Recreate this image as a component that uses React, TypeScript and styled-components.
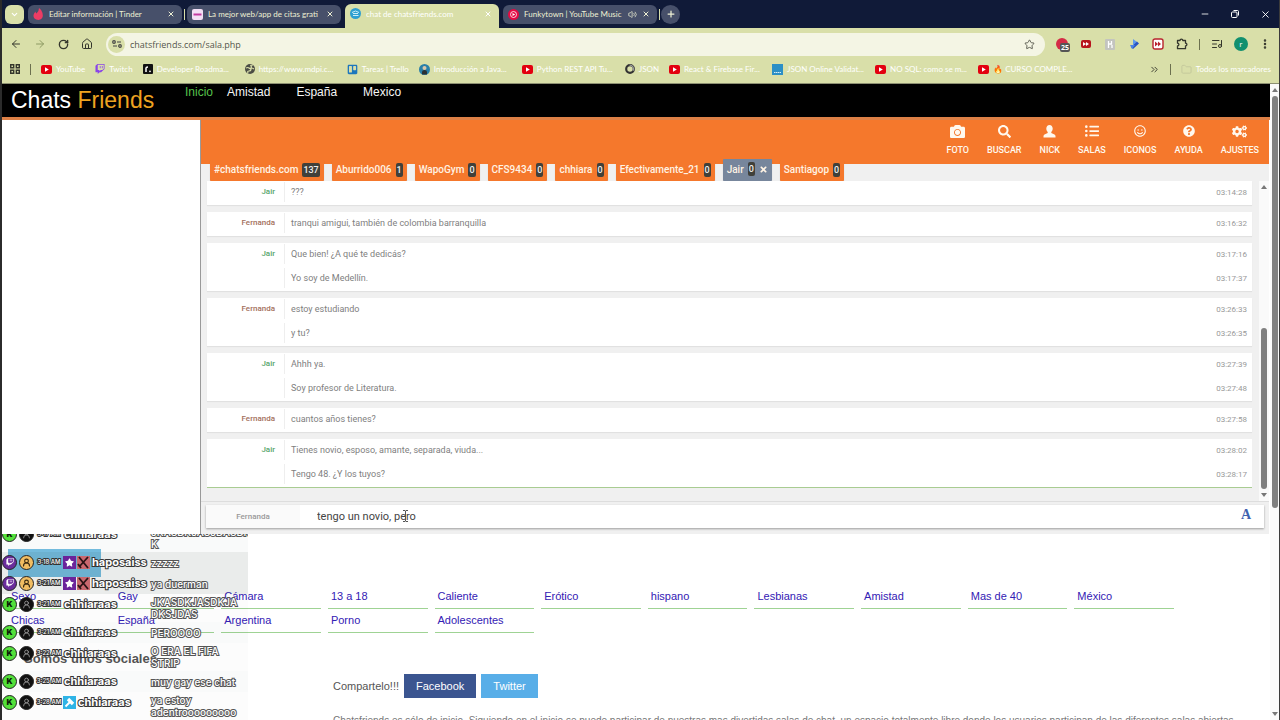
import React from "react";
import styled, { createGlobalStyle } from "styled-components";
import { FaCamera, FaSearch, FaListUl, FaRegSmile, FaQuestionCircle, FaCogs, FaTwitch, FaTimes, FaStar, FaTrello } from "react-icons/fa";
import { ArrowLeft, ArrowRight, RotateCw, House, Star, ListMusic, EllipsisVertical, X, Plus, Minus, ChevronDown, ChevronsRight, Folder, Volume2, UserRound } from "lucide-react";

const GlobalStyle = createGlobalStyle`
  * { box-sizing: border-box; }
  body { margin: 0; background: #fff; }
  button, input { font: inherit; color: inherit; border: 0; padding: 0; background: none; }
  a { color: inherit; text-decoration: none; }
  svg { flex: none; display: block; }
`;

const khaki = "#d9dfa9";
const orange = "#f5782c";
const chromeFont = 'Lato, "Open Sans", sans-serif';

const Window = styled.div`
  position: relative;
  display: flex;
  flex-direction: column;
  height: 100vh;
  overflow: hidden;
  border-left: 2px solid #2b2b2b;
  border-right: 1px solid #3b3b3b;
  font-family: "Liberation Sans", Arial, sans-serif;
`;

/* Browser chrome */
const TabStrip = styled.div`
  display: flex;
  align-items: center;
  flex: none;
  height: 28px;
  padding: 0 8px 0 3px;
  background: #101a38;
  font: 8px ${chromeFont};
`;
const TabSearch = styled.button`
  display: grid;
  place-items: center;
  width: 19px;
  height: 19px;
  margin-right: 2px;
  border-radius: 6px;
  background: ${khaki};
  color: #fff;
`;
const BrowserTab = styled.div<{ $active?: boolean }>`
  display: flex;
  align-items: center;
  gap: 5px;
  width: 154px;
  height: ${(p) => (p.$active ? "24px" : "19px")};
  align-self: ${(p) => (p.$active ? "flex-end" : "center")};
  margin: 0 2px;
  padding: ${(p) => (p.$active ? "0 7px 5px 5px" : "0 7px 0 5px")};
  border-radius: ${(p) => (p.$active ? "6px 6px 0 0" : "6px")};
  background: ${(p) => (p.$active ? khaki : "#47506a")};
  color: ${(p) => (p.$active ? "#fff" : "#eef0d4")};
`;
const TabTitle = styled.span`
  flex: 1;
  overflow: hidden;
  white-space: nowrap;
`;
const PlainButton = styled.button`
  display: grid;
  place-items: center;
`;
const TabDivider = styled.i`
  width: 1px;
  height: 11px;
  background: ${khaki};
`;
const NewTab = styled(PlainButton)`
  width: 19px;
  height: 19px;
  margin-left: 1px;
  border-radius: 50%;
  background: #47506a;
  color: #eef0d4;
`;
const WindowControls = styled.div`
  display: flex;
  gap: 20px;
  margin-left: auto;
  color: #fff;
`;
const Toolbar = styled.div`
  display: flex;
  align-items: center;
  flex: none;
  height: 32px;
  padding: 0 8px;
  background: ${khaki};
  color: #34362c;
`;
const IconGroup = styled.div`
  display: flex;
  align-items: center;
  gap: 12px;
`;
const MenuGroup = styled(IconGroup)`
  gap: 11px;
  margin-left: 11px;
`;
const Address = styled.label`
  display: flex;
  align-items: center;
  flex: 1;
  gap: 5px;
  height: 23px;
  margin: 0 11px 0 13px;
  padding: 0 10px 0 2px;
  border-radius: 12px;
  background: #f4f5e4;
  color: #55564c;
  font: 9px "Open Sans", "Noto Sans", sans-serif;
`;
const SiteInfo = styled.span`
  display: grid;
  place-items: center;
  width: 17px;
  height: 17px;
  border-radius: 50%;
  background: ${khaki};
`;
const AddressInput = styled.input`
  flex: 1;
  min-width: 0;
  outline: 0;
`;
const AdBadge = styled.span`
  position: relative;
  width: 12px;
  height: 12px;
  border-radius: 50%;
  background: #d42b46;
`;
const AdCount = styled.b`
  position: absolute;
  left: 4px;
  top: 5px;
  padding: 0 1px;
  border-radius: 2px;
  background: #555;
  color: #fff;
  font: bold 7px/9px "Open Sans", sans-serif;
`;
const Avatar = styled.span`
  display: grid;
  place-items: center;
  width: 14px;
  height: 14px;
  border-radius: 50%;
  background: #11906f;
  color: #fff;
  font: 8px/14px "Open Sans", sans-serif;
`;
const Divider = styled.i`
  width: 1px;
  height: 11px;
  background: #6c704f;
`;
const Bookmarks = styled.nav`
  display: flex;
  align-items: center;
  flex: none;
  gap: 10px;
  height: 24px;
  padding: 0 8px 5px;
  border-bottom: 1px solid #8d9072;
  background: ${khaki};
  color: #fff;
  font: 8px ${chromeFont};
  white-space: nowrap;
`;
const Bookmark = styled.a`
  display: flex;
  align-items: center;
  gap: 4px;
`;
const BookmarkText = styled.span<{ $long?: boolean }>`
  width: ${(p) => (p.$long ? "78px" : "auto")};
`;
const Spacer = styled.span`
  flex: 1;
`;

/* Web page */
const Viewport = styled.div`
  display: flex;
  flex: 1;
  min-height: 0;
`;
const Page = styled.main`
  flex: 1;
  min-width: 0;
  overflow: hidden;
  background: #fff;
`;
const ScrollTrack = styled.div<{ $width: number }>`
  display: flex;
  flex-direction: column;
  align-items: center;
  flex: none;
  width: ${(p) => p.$width}px;
  padding: 4px 0;
  background: #fafafa;
`;
const ScrollArrow = styled.i<{ $down?: boolean }>`
  width: 0;
  height: 0;
  border: solid transparent;
  border-width: ${(p) => (p.$down ? "4px 3px 0" : "0 3px 4px")};
  border-color: ${(p) => (p.$down ? "#777 transparent transparent" : "transparent transparent #777")};
`;
const ScrollSpace = styled.i<{ $grow: number }>`
  flex: ${(p) => p.$grow} 1 0;
`;
const ScrollThumb = styled.i<{ $grow: number }>`
  flex: ${(p) => p.$grow} 1 0;
  width: 6px;
  margin: 4px 0;
  border-radius: 3px;
  background: #808080;
`;
const SiteHeader = styled.header`
  display: flex;
  height: 36px;
  padding-left: 9px;
  border-bottom: 3px solid #dd8046;
  background: #000;
`;
const Brand = styled.h1`
  width: 174px;
  margin: 0;
  padding-top: 3px;
  color: #fff;
  font-size: 23px;
  font-weight: 400;
  line-height: 27px;
  span { color: #eea320; }
`;
const SiteNav = styled.nav`
  display: flex;
  padding-top: 1px;
  color: #f5f5f5;
  font-size: 12px;
  line-height: 14px;
`;
const NavLink = styled.a<{ $current?: boolean }>`
  margin-right: ${(p) => (p.$current ? "14px" : "26px")};
  color: ${(p) => (p.$current ? "#56c24b" : "inherit")};
`;
const ChatFrame = styled.section`
  display: flex;
  height: 414px;
  margin-right: 1px;
  font-family: Roboto, sans-serif;
`;
const Side = styled.aside`
  width: 199px;
  border-right: 1px solid #999;
`;
const Chat = styled.div`
  display: flex;
  flex-direction: column;
  flex: 1;
  min-width: 0;
  background: #f0f0f0;
`;
const ActionBar = styled.div`
  display: flex;
  justify-content: flex-end;
  flex: none;
  gap: 18px;
  height: 44px;
  padding: 4px 10px 0;
  background: ${orange};
  color: #fff8ee;
`;
const Action = styled.button`
  display: grid;
  grid-template-rows: 14px 14px;
  align-content: start;
  place-items: center;
  row-gap: 5px;
  height: 34px;
  font-size: 9px;
  font-weight: 500;
  line-height: 14px;
`;
const RoomTabs = styled.div`
  display: flex;
  align-items: flex-end;
  flex: none;
  gap: 8px;
  height: 22px;
  margin-top: -5px;
  padding-left: 9px;
`;
const RoomTab = styled.button<{ $active?: boolean }>`
  display: flex;
  align-items: center;
  gap: 4px;
  height: ${(p) => (p.$active ? "22px" : "21px")};
  padding: 0 4px 2px;
  border-radius: 1px;
  background: ${(p) => (p.$active ? "#77869c" : orange)};
  box-shadow: 0 1px 1px rgba(0, 0, 0, 0.2);
  color: #fff3e4;
  font-size: 10px;
  font-weight: 500;
`;
const Count = styled.span`
  padding: 0 1px;
  border-radius: 2px;
  background: #40403a;
  color: #eee;
  font-size: 9px;
  line-height: 14px;
`;
const LogArea = styled.div`
  display: flex;
  flex: 1;
  min-height: 0;
  padding-left: 6px;
`;
const Log = styled.div`
  display: flex;
  flex-direction: column;
  flex: 1;
  gap: 7px;
  margin-right: 7px;
`;
const Card = styled.article`
  background: #fff;
  box-shadow: 0 1px 1px rgba(0, 0, 0, 0.06);
  &:last-child { box-shadow: 0 1px 0 #a9cc92; }
`;
const Line = styled.div`
  display: grid;
  grid-template-columns: 78px 1fr auto;
  align-items: center;
  height: 24px;
  padding: 0 5px 2px 0;
  color: #808080;
  font-size: 9px;
`;
const Nick = styled.span<{ $tone: string }>`
  padding-right: 9px;
  border-right: 1px solid #eee;
  color: ${(p) => p.$tone};
  font-size: 8px;
  font-weight: 500;
  line-height: 20px;
  text-align: right;
`;
const Text = styled.span`
  padding-left: 6px;
`;
const Time = styled.time`
  color: #999;
  font-size: 8px;
`;
const Composer = styled.div`
  flex: none;
  height: 33px;
  padding: 3px 5px 0;
  border-top: 1px solid #ddd;
`;
const ComposerField = styled.label`
  display: flex;
  align-items: center;
  height: 23px;
  padding-right: 13px;
  background: #fff;
  box-shadow: 0 1px 2px rgba(0, 0, 0, 0.35);
`;
const ComposerNick = styled.span`
  width: 94px;
  margin-right: 17px;
  background: #fafafa;
  color: #999;
  font-size: 8px;
  font-weight: 500;
  line-height: 23px;
  text-align: center;
`;
const ComposerInput = styled.input`
  flex: 1;
  outline: 0;
  color: #444;
  font-size: 11px;
`;
const FontButton = styled.button`
  padding-bottom: 4px;
  color: #3f62b0;
  font: bold 14px "Liberation Serif", serif;
`;
const Promo = styled.div`
  width: 93px;
  height: 28px;
  margin: 15px 0 0 6px;
  background: #76bfe2;
`;
const Topics = styled.nav`
  display: grid;
  grid-template-columns: repeat(11, 1fr);
  column-gap: 7px;
  margin: 8px 96px 0 6px;
  color: #3320b4;
  font-size: 11px;
`;
const Topic = styled.a`
  height: 24px;
  padding-left: 3px;
  border-bottom: 1px solid #9fd394;
  line-height: 22px;
  white-space: nowrap;
`;
const Social = styled.h2`
  margin: 18px 0 0 22px;
  color: #555;
  font-size: 13px;
  line-height: 16px;
`;
const About = styled.section`
  margin: 7px 10px 0 331px;
  color: #555;
  font-size: 11px;
`;
const Share = styled.div`
  display: flex;
  align-items: center;
  gap: 5px;
`;
const ShareLink = styled.a<{ $color: string }>`
  padding: 0 12px;
  background: ${(p) => p.$color};
  color: #fff;
  line-height: 24px;
`;
const Blurb = styled.p`
  margin: 17px 0 0;
  color: #777;
  font-size: 10px;
  line-height: 12px;
`;

/* Stream chat laid over the page */
const Overlay = styled.aside`
  position: absolute;
  left: 0;
  bottom: 0;
  display: flex;
  flex-direction: column;
  justify-content: flex-end;
  width: 246px;
  height: 186px;
  overflow: hidden;
  font-family: Inter, sans-serif;
`;
const StreamRow = styled.div<{ $tint: number }>`
  display: grid;
  grid-template-columns: 149px 1fr;
  flex: none;
  min-height: 21px;
  padding: 2px 0;
  background: rgba(20, 40, 35, ${(p) => p.$tint});
`;
const Sender = styled.div`
  display: flex;
  align-items: center;
  gap: 1px;
  height: 16px;
`;
const Dot = styled.span<{ $bg: string; $fg: string }>`
  display: grid;
  place-items: center;
  flex: none;
  width: 15px;
  height: 15px;
  margin-right: 1px;
  border: 1px solid #222;
  border-radius: 50%;
  background: ${(p) => p.$bg};
  color: ${(p) => p.$fg};
  font-size: 8px;
  font-weight: 900;
`;
const Outlined = styled.span<{ $size: number; $weight: number }>`
  color: #fff;
  font-size: ${(p) => p.$size}px;
  font-weight: ${(p) => p.$weight};
  line-height: 12px;
  paint-order: stroke fill;
  -webkit-text-stroke: 2px #333;
  white-space: nowrap;
`;
const StampBox = styled.span`
  display: flex;
  justify-content: center;
  width: 26px;
`;
const Said = styled(Outlined)`
  align-self: center;
  -webkit-text-stroke: 2px #555;
  white-space: pre;
`;
const Badge = styled.span<{ $bg: string }>`
  display: grid;
  place-items: center;
  flex: none;
  width: 13px;
  height: 13px;
  background: ${(p) => p.$bg};
  color: #fff;
`;
const NameBox = styled.span`
  display: flex;
  padding-left: 1px;
`;
const Caret = styled.svg`
  position: absolute;
  left: 399px;
  top: 510px;
`;

const TubeIcon = () => (
  <svg width="11" height="9" viewBox="0 0 11 9"><rect width="11" height="9" rx="2" fill="#e3000f" /><path d="M4 2.2 7.8 4.5 4 6.8z" fill="#fff" /></svg>
);
const GlobeIcon = () => (
  <svg width="10" height="10" viewBox="0 0 10 10"><circle cx="5" cy="5" r="5" fill="#4b4d45" /><path d="M1 4q2-1 3 0t2 0 0-2 2-1M3 9q-1-2 1-2t2-2 3 0" fill="none" stroke={khaki} strokeWidth="1.2" /></svg>
);
const bookmarkIcons: Record<string, React.ReactNode> = {
  tube: <TubeIcon />,
  twitch: <FaTwitch size={10} color="#8a45e8" />,
  road: <svg width="10" height="10" viewBox="0 0 10 10"><rect width="10" height="10" rx="1" fill="#111" /><path d="M3 8V4q0-1 2-1" fill="none" stroke="#fff" strokeWidth="1.5" /><circle cx="7" cy="7.3" r=".9" fill="#fff" /></svg>,
  globe: <GlobeIcon />,
  trello: <FaTrello size={11} color="#1c76bd" />,
  java: <svg width="11" height="11" viewBox="0 0 11 11"><circle cx="5.5" cy="5.5" r="5.5" fill="#287fa8" /><circle cx="5.5" cy="4" r="2" fill="#d9c7aa" /><path d="M3 10.4V8q0-2 2.5-2T8 8v2.4z" fill="#2c3133" /></svg>,
  json: <svg width="10" height="10" viewBox="0 0 11 11"><circle cx="5.5" cy="5.5" r="4.2" fill="none" stroke="#333" strokeWidth="2.4" /><path d="M5 1.3a4.2 4.2 0 0 1 4 6" fill="none" stroke="#999" strokeWidth="1.4" /></svg>,
  valid: <svg width="11" height="11" viewBox="0 0 11 11"><rect width="11" height="11" fill="#2b8fc6" /><path d="M2 8.5h7" stroke="#d9eef8" strokeDasharray="1.5 .5" /></svg>,
};
const bookmarks: [string, string, boolean?][] = [
  ["tube", "YouTube"],
  ["twitch", "Twitch"],
  ["road", "Developer Roadma...", true],
  ["globe", "https://www.mdpi.c...", true],
  ["trello", "Tareas | Trello"],
  ["java", "Introducción a Java...", true],
  ["tube", "Python REST API Tu...", true],
  ["json", "JSON"],
  ["tube", "React & Firebase Fir...", true],
  ["valid", "JSON Online Validat...", true],
  ["tube", "NO SQL: como se m...", true],
  ["tube", "🔥 CURSO COMPLE...", true],
];

const NickIcon = () => (
  <svg width="13" height="13" viewBox="0 0 13 13" fill="currentColor"><path d="M6.5 0C4.6 0 3.3 1.5 3.3 3.6c0 1.5.6 2.7 1.4 3.4v1L1.5 9.4Q.5 10 .5 11v1.500h12V11q0-1-1-1.600L8.300 8V7c.8-.7 1.400-1.900 1.400-3.400C9.700 1.500 8.400 0 6.500 0z" /></svg>
);
const actions: [string, React.ReactNode][] = [
  ["FOTO", <FaCamera size={15} />],
  ["BUSCAR", <FaSearch size={13} />],
  ["NICK", <NickIcon />],
  ["SALAS", <FaListUl size={14} />],
  ["ICONOS", <FaRegSmile size={12} />],
  ["AYUDA", <FaQuestionCircle size={12} />],
  ["AJUSTES", <FaCogs size={15} />],
];
const rooms: [string, number][] = [
  ["#chatsfriends.com", 137],
  ["Aburrido006", 1],
  ["WapoGym", 0],
  ["CFS9434", 0],
  ["chhiara", 0],
  ["Efectivamente_21", 0],
  ["Jair", 0],
  ["Santiagop", 0],
];
const messages: { nick: string; lines: [string, string][] }[] = [
  { nick: "Jair", lines: [["???", "03:14:28"]] },
  { nick: "Fernanda", lines: [["tranqui amigui, también de colombia barranquilla", "03:16:32"]] },
  { nick: "Jair", lines: [["Que bien! ¿A qué te dedicás?", "03:17:16"], ["Yo soy de Medellín.", "03:17:37"]] },
  { nick: "Fernanda", lines: [["estoy estudiando", "03:26:33"], ["y tu?", "03:26:35"]] },
  { nick: "Jair", lines: [["Ahhh ya.", "03:27:39"], ["Soy profesor de Literatura.", "03:27:48"]] },
  { nick: "Fernanda", lines: [["cuantos años tienes?", "03:27:58"]] },
  { nick: "Jair", lines: [["Tienes novio, esposo, amante, separada, viuda...", "03:28:02"], ["Tengo 48. ¿Y los tuyos?", "03:28:17"]] },
];
const topics = ["Sexo", "Gay", "Cámara", "13 a 18", "Caliente", "Erótico", "hispano", "Lesbianas", "Amistad", "Mas de 40", "México", "Chicas", "España", "Argentina", "Porno", "Adolescentes"];

type StreamMessage = { from: string; at: string; text: string; twitch?: boolean; mod?: boolean };
const stream: StreamMessage[] = [
  { from: "chhiaraas", at: "3:17 AM", text: "JKASDKJASJDASDK\nK" },
  { from: "haposaiss", at: "3:18 AM", text: "zzzzz", twitch: true },
  { from: "haposaiss", at: "3:21 AM", text: "ya duerman", twitch: true },
  { from: "chhiaraas", at: "3:21 AM", text: "JKASDKJASDKJA\nDKSJDAS" },
  { from: "chhiaraas", at: "3:21 AM", text: "PEROOOO" },
  { from: "chhiaraas", at: "3:22 AM", text: "O ERA EL FIFA\nSTRIP" },
  { from: "chhiaraas", at: "3:25 AM", text: "muy gay ese chat" },
  { from: "chhiaraas", at: "3:28 AM", text: "ya estoy\nadentrooooooooo", mod: true },
];

const Tab = ({ title, icon, active, sound }: { title: string; icon: React.ReactNode; active?: boolean; sound?: boolean }) => (
  <BrowserTab $active={active}>
    {icon}
    <TabTitle>{title}</TabTitle>
    {sound && <Volume2 size={9} />}
    <PlainButton aria-label="Cerrar"><X size={8} strokeWidth={3} /></PlainButton>
  </BrowserTab>
);

export default function App() {
  return (
    <Window>
      <GlobalStyle />
      <TabStrip>
        <TabSearch aria-label="Buscar pestañas"><ChevronDown size={9} strokeWidth={3} /></TabSearch>
        <Tab title="Editar información | Tinder" icon={<svg width="11" height="12" viewBox="0 0 11 12"><path d="M6 0q3 2 3.500 5Q11 11 5.500 12 0 11.500 .5 7 1 5 2.500 3.500q0 1.500 1 2Q6 3.500 6 0z" fill="#ed3c64" /></svg>} />
        <TabDivider />
        <Tab title="La mejor web/app de citas grati" icon={<svg width="11" height="11" viewBox="0 0 11 11"><rect width="11" height="11" rx="2" fill="#f2dff5" /><path d="M1.5 5.5h8" stroke="#c33aa1" strokeWidth="2" /></svg>} />
        <Tab active title="chat de chatsfriends.com" icon={<svg width="11" height="11" viewBox="0 0 11 11"><circle cx="5.5" cy="5.5" r="5.5" fill="#2e9fd0" /><path d="M2 4.5q3.500-3 7 0M3 7.500h5.500M3 5.500h5" stroke="#c9edf7" fill="none" /></svg>} />
        <Tab sound title="Funkytown | YouTube Music" icon={<svg width="11" height="11" viewBox="0 0 11 11"><circle cx="5.5" cy="5.5" r="5.5" fill="#e50a43" /><circle cx="5.5" cy="5.5" r="3" fill="none" stroke="#fff" strokeWidth=".8" /><path d="M4.500 3.900 7.200 5.500 4.500 7.100z" fill="#fff" /></svg>} />
        <TabDivider />
        <NewTab aria-label="Nueva pestaña"><Plus size={10} strokeWidth={3} /></NewTab>
        <WindowControls>
          <PlainButton aria-label="Minimizar"><Minus size={10} /></PlainButton>
          <PlainButton aria-label="Restaurar"><svg width="10" height="10" viewBox="0 0 10 10" fill="none" stroke="currentColor"><rect x="1.5" y="3" width="5.5" height="5.5" rx="1" /><path d="M3.5 1.500h4q1 0 1 1v4" /></svg></PlainButton>
          <PlainButton aria-label="Cerrar ventana"><X size={11} /></PlainButton>
        </WindowControls>
      </TabStrip>
      <Toolbar>
        <IconGroup>
          <PlainButton aria-label="Atrás"><ArrowLeft size={12} /></PlainButton>
          <PlainButton aria-label="Adelante"><ArrowRight size={12} color="#8d9a62" /></PlainButton>
          <PlainButton aria-label="Recargar"><RotateCw size={11} strokeWidth={3} /></PlainButton>
          <PlainButton aria-label="Inicio"><House size={12} /></PlainButton>
        </IconGroup>
        <Address>
          <SiteInfo><svg width="10" height="8" viewBox="0 0 10 8" fill="none" stroke="#444" strokeWidth="1.2"><circle cx="2" cy="2" r="1.3" /><path d="M5 2h4M1 6h4" /><circle cx="8" cy="6" r="1.3" /></svg></SiteInfo>
          <AddressInput aria-label="Dirección" defaultValue="chatsfriends.com/sala.php" />
          <Star size={11} />
        </Address>
        <IconGroup>
          <AdBadge><AdCount>25</AdCount></AdBadge>
          <svg width="12" height="12" viewBox="0 0 12 12"><rect x="1" y="2" width="10" height="8" rx="2" fill="#b8141c" /><path d="M3 4v4l3-2zM6 4v4l3-2z" fill="#fff" /></svg>
          <svg width="12" height="12" viewBox="0 0 12 12"><rect x="1" y="1" width="10" height="11" rx="1" fill="#c3c4bf" /><path d="M4.5 3v7M7.500 3v3h-3M8 7v3" stroke="#fff" strokeWidth="1.3" fill="none" /></svg>
          <svg width="12" height="12" viewBox="0 0 12 12"><path d="M5 1l4 3-4 3z" fill="#5c99ee" /><path d="M9 3.500l2 2L5 11 3 9z" fill="#2753c4" /><path d="M2 7h5l-3 4z" fill="#4a82e4" /></svg>
          <svg width="12" height="12" viewBox="0 0 12 12"><rect x="1" y="1" width="10" height="10" rx="2" fill="#fff" stroke="#b8232e" strokeWidth="1.4" /><path d="M3 3.500v5L6 6zM6 3.500v5L9 6z" fill="#b8232e" /></svg>
          <svg width="12" height="12" viewBox="0 0 12 12" fill="none" stroke="currentColor" strokeWidth="1.3"><path d="M1.500 2.500h2.500a1.400 1.400 0 0 1 2.800 0h2.700v2.700a1.400 1.400 0 0 1 0 2.800v2.700H1.500V8a1.400 1.400 0 0 0 0-2.800z" strokeLinejoin="round" /></svg>
        </IconGroup>
        <MenuGroup>
          <Divider />
          <ListMusic size={12} />
          <Avatar>r</Avatar>
          <EllipsisVertical size={12} strokeWidth={3} />
        </MenuGroup>
      </Toolbar>
      <Bookmarks aria-label="Marcadores">
        <svg width="10" height="10" viewBox="0 0 10 10" fill="none" stroke="#34362c" strokeWidth="1.4"><path d="M.7.7h3v3h-3zM6.300.7h3v3h-3zM.7 6.300h3v3h-3zM6.300 6.300h3v3h-3z" /></svg>
        <Divider />
        {bookmarks.map(([icon, text, long]) => (
          <Bookmark href="#" key={text}>
            {bookmarkIcons[icon]}
            <BookmarkText $long={long}>{text}</BookmarkText>
          </Bookmark>
        ))}
        <Spacer />
        <ChevronsRight size={11} color="#34362c" />
        <Divider />
        <Bookmark href="#"><Folder size={11} color="#c3c79b" />Todos los marcadores</Bookmark>
      </Bookmarks>

      <Viewport>
        <Page>
          <SiteHeader>
            <Brand>Chats <span>Friends</span></Brand>
            <SiteNav>
              <NavLink href="#" $current>Inicio</NavLink>
              <NavLink href="#">Amistad</NavLink>
              <NavLink href="#">España</NavLink>
              <NavLink href="#">Mexico</NavLink>
            </SiteNav>
          </SiteHeader>
          <ChatFrame>
            <Side />
            <Chat>
              <ActionBar>
                {actions.map(([label, icon]) => (
                  <Action key={label}>{icon}<span>{label}</span></Action>
                ))}
              </ActionBar>
              <RoomTabs>
                {rooms.map(([name, count]) => (
                  <RoomTab key={name} $active={name === "Jair"}>
                    {name}
                    <Count>{count}</Count>
                    {name === "Jair" && <FaTimes size={9} />}
                  </RoomTab>
                ))}
              </RoomTabs>
              <LogArea>
                <Log>
                  {messages.map((m) => (
                    <Card key={m.lines[0][1]}>
                      {m.lines.map(([text, time], i) => (
                        <Line key={time}>
                          <Nick $tone={m.nick === "Jair" ? "#57a56b" : "#a3705c"}>{i === 0 ? m.nick : "\u00a0"}</Nick>
                          <Text>{text}</Text>
                          <Time>{time}</Time>
                        </Line>
                      ))}
                    </Card>
                  ))}
                </Log>
                <ScrollTrack $width={10}>
                  <ScrollArrow />
                  <ScrollSpace $grow={135} />
                  <ScrollThumb $grow={161} />
                  <ScrollArrow $down />
                </ScrollTrack>
              </LogArea>
              <Composer>
                <ComposerField>
                  <ComposerNick>Fernanda</ComposerNick>
                  <ComposerInput aria-label="Mensaje" defaultValue="tengo un novio, pero" />
                  <FontButton>A</FontButton>
                </ComposerField>
              </Composer>
            </Chat>
          </ChatFrame>
          <Promo />
          <Topics>
            {topics.map((t) => <Topic href="#" key={t}>{t}</Topic>)}
          </Topics>
          <Social>Somos unos sociales</Social>
          <About>
            <Share>
              Compartelo!!!
              <ShareLink href="#" $color="#3b5590">Facebook</ShareLink>
              <ShareLink href="#" $color="#58aee8">Twitter</ShareLink>
            </Share>
            <Blurb>Chatsfriends es sólo de inicio. Siguiendo en el inicio se puede participar de nuestras mas divertidas salas de chat, un espacio totalmente libre donde los usuarios participan de las diferentes salas abiertas.</Blurb>
          </About>
        </Page>
        <ScrollTrack $width={9}>
          <ScrollArrow />
          <ScrollThumb $grow={411} />
          <ScrollSpace $grow={200} />
          <ScrollArrow $down />
        </ScrollTrack>
      </Viewport>

      <Overlay>
        {stream.map((m, i) => (
          <StreamRow key={i} $tint={m.twitch ? 0.09 : i % 2 === 0 ? 0.025 : 0.01}>
            <Sender>
              {m.twitch ? <Dot $bg="#6a2c9c" $fg="#fff"><FaTwitch size={8} /></Dot> : <Dot $bg="#53e03a" $fg="#0c1c08">K</Dot>}
              {m.twitch ? <Dot $bg="#f1bd62" $fg="#3a2a12"><UserRound size={9} strokeWidth={3} /></Dot> : <Dot $bg="#111" $fg="#aaa"><UserRound size={9} /></Dot>}
              <StampBox><Outlined $size={6} $weight={500}>{m.at}</Outlined></StampBox>
              {m.twitch && <Badge $bg="#6b239b"><FaStar size={9} /></Badge>}
              {m.twitch && <Badge $bg="#c9686f"><svg width="13" height="13" viewBox="0 0 13 13" stroke="#2b1416" strokeWidth="1.8" fill="none"><path d="M2 1l9 11M11 1 2 11M1 8l3 4" /></svg></Badge>}
              {m.mod && <Badge $bg="#2fb4e6"><svg width="11" height="11" viewBox="0 0 11 11" fill="none" stroke="#fff"><path d="M1.500 9.500 6 5" strokeWidth="2" /><path d="M4 2l5 5" strokeWidth="3.4" /></svg></Badge>}
              <NameBox><Outlined $size={11} $weight={700}>{m.from}</Outlined></NameBox>
            </Sender>
            <Said $size={10} $weight={500}>{m.text}</Said>
          </StreamRow>
        ))}
      </Overlay>
      <Caret width="9" height="12" viewBox="0 0 9 12" fill="none" stroke="#555"><path d="M2 .5h2l.5.5.5-.5h2M4.500 1v10M2 11.500h2l.5-.5.5.5h2" /></Caret>
    </Window>
  );
}
